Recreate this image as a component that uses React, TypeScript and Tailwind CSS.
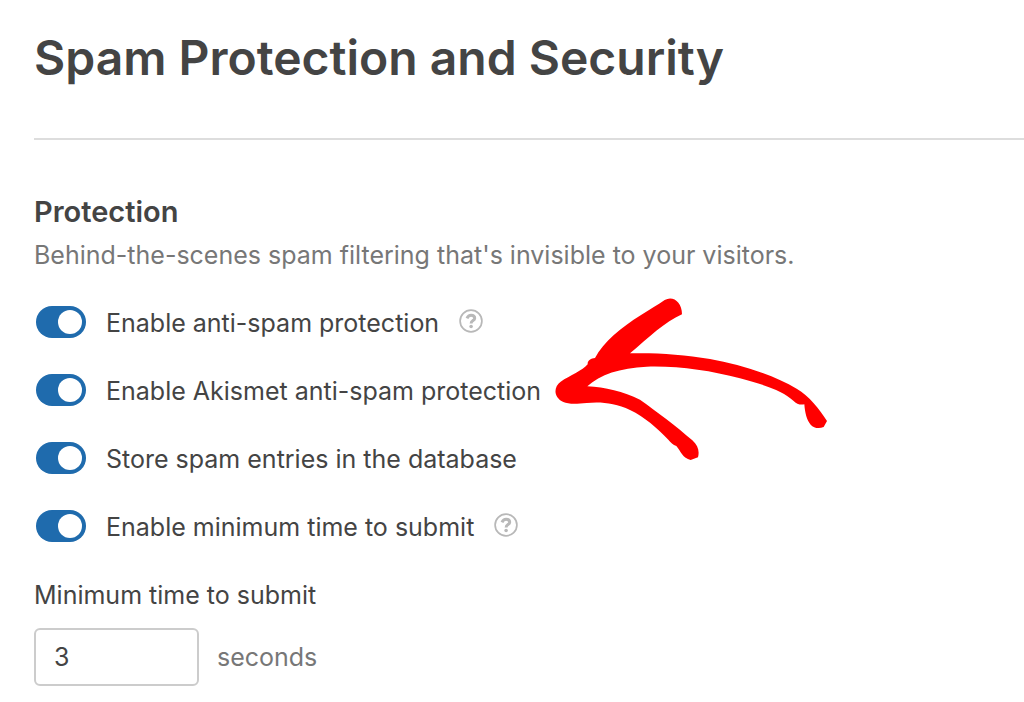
import { useState } from "react";

interface ToggleOption {
  id: string;
  label: string;
  help?: string;
  highlighted?: boolean;
}

const options: ToggleOption[] = [
  { id: "antispam", label: "Enable anti-spam protection", help: "About anti-spam protection" },
  { id: "akismet", label: "Enable Akismet anti-spam protection", highlighted: true },
  { id: "store", label: "Store spam entries in the database" },
  { id: "min-time", label: "Enable minimum time to submit", help: "About minimum time" },
];

function HelpIcon() {
  return (
    <svg xmlns="http://www.w3.org/2000/svg" viewBox="0 0 24 24" fill="none" stroke="currentColor" className="size-6">
      <circle cx="12" cy="12" r="10.9" strokeWidth="1.7" />
      <path d="M8 9.3C8.9 7.2 10.3 6.2 12.1 6.2C14.2 6.2 15.7 7.4 15.7 9.2C15.7 11.7 12.1 11.5 12.1 14.4" strokeWidth="3" />
      <circle cx="12.1" cy="17.5" r="1.8" fill="currentColor" stroke="none" />
    </svg>
  );
}

function Arrow() {
  return (
    <svg
      xmlns="http://www.w3.org/2000/svg"
      viewBox="45 36 819 492"
      fill="#ff0000"
      aria-hidden="true"
      className="pointer-events-none absolute left-[521px] -top-[77px] w-[273px] h-[164px]"
    >
      <path d="M165 219C190 171 245 127 302 91C330 73 355 58 374 45C398 31 426 50 426 88C375 110 326 158 270 205C345 203 430 208 510 222C600 238 700 270 770 311C808 334 838 371 861 408L851 426C835 433 821 428 812 419C800 406 795 384 793 358C780 361 770 356 760 347C730 318 670 298 600 280C510 256 410 242 320 245C240 249 180 268 142 304C195 306 250 320 300 344C350 380 410 424 457 466C474 482 479 498 474 517L452 525C428 520 422 498 409 483C399 479 392 473 385 464C350 429 315 396 270 375C225 353 180 350 140 354C110 357 85 358 70 351C40 337 40 306 62 290C90 272 128 256 143 238C142 226 153 220 165 219Z" />
    </svg>
  );
}

function ToggleRow({ option }: { option: ToggleOption }) {
  const [checked, setChecked] = useState(true);

  return (
    <li className="relative flex items-center h-8">
      <input
        id={option.id}
        type="checkbox"
        checked={checked}
        onChange={(e) => setChecked(e.target.checked)}
        className="appearance-none flex items-center shrink-0 w-[50px] h-8 ml-0.5 px-1 rounded-full cursor-pointer bg-gray-400 checked:bg-[#1f6bad] checked:justify-end before:block before:size-6 before:rounded-full before:bg-white"
      />
      <label htmlFor={option.id} className="ml-5 pt-0.5 text-[25px] leading-8 cursor-pointer">
        {option.label}
      </label>
      {option.help && (
        <button type="button" aria-label={option.help} className="ml-5 pb-0.5 text-[#b8b8b8]">
          <HelpIcon />
        </button>
      )}
      {option.highlighted && <Arrow />}
    </li>
  );
}

export default function App() {
  const [seconds, setSeconds] = useState("3");

  return (
    <main className="min-h-screen overflow-hidden bg-white pl-[34px] pb-4 font-['Inter',sans-serif] text-[#444444]">
      <header className="pt-7 pb-[50px] border-b-2 border-[#dddddd]">
        <h1 className="text-[48px] leading-[60px] font-semibold">Spam Protection and Security</h1>
      </header>

      <section className="pt-14">
        <h2 className="text-[29px] leading-8 font-semibold">Protection</h2>
        <p className="mt-[11px] text-[25px] leading-8 text-[#777777]">
          Behind-the-scenes spam filtering that's invisible to your visitors.
        </p>

        <ul className="mt-[35px] flex flex-col gap-9">
          {options.map((option) => (
            <ToggleRow key={option.id} option={option} />
          ))}
        </ul>

        <label htmlFor="seconds" className="block mt-[37px] text-[25px] leading-8">
          Minimum time to submit
        </label>
        <div className="mt-[17px] flex items-center gap-[18px]">
          <input
            id="seconds"
            type="text"
            inputMode="numeric"
            value={seconds}
            onChange={(e) => setSeconds(e.target.value)}
            className="w-[165px] h-[58px] px-[18px] text-[25px] border-2 border-[#cccccc] rounded-md"
          />
          <span className="text-[25px] leading-8 text-[#777777]">seconds</span>
        </div>
      </section>
    </main>
  );
}
